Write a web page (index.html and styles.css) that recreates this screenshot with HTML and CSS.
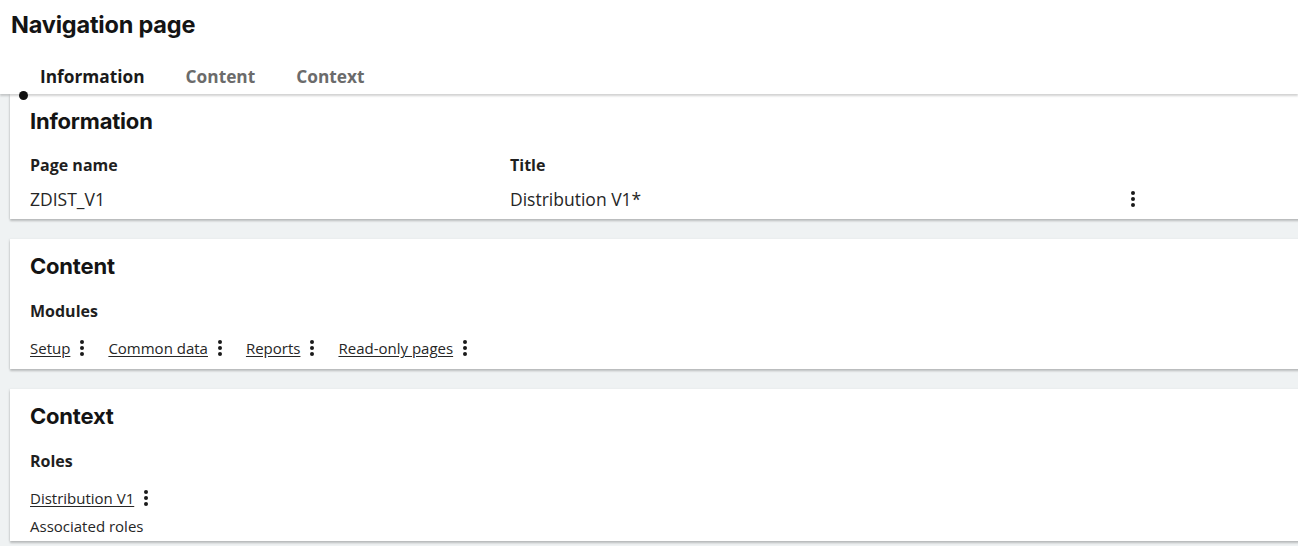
FILE: index.html
```html
<!DOCTYPE html>
<html>
<head>
<meta charset="utf-8">
<link rel="stylesheet" href="styles.css">
</head>
<body>
<header class="top">
  <h1 class="page-title">Navigation page</h1>
  <nav class="tabs">
    <span class="tab active">Information</span>
    <span class="tab">Content</span>
    <span class="tab">Context</span>
    <span class="tab-dot"></span>
  </nav>
</header>
<main class="main">
  <section class="card">
    <h2 class="card-title">Information</h2>
    <div class="info-grid">
      <div class="field">
        <div class="label">Page name</div>
        <div class="value">ZDIST_V1</div>
      </div>
      <div class="field">
        <div class="label">Title</div>
        <div class="value">Distribution V1*</div>
      </div>
      <div class="field">
        <div class="label">&nbsp;</div>
        <div class="value value-action">
          <svg class="kebab" width="4" height="16" viewBox="0 0 4 16"><circle cx="2" cy="2" r="2"/><circle cx="2" cy="8" r="2"/><circle cx="2" cy="14" r="2"/></svg>
        </div>
      </div>
    </div>
  </section>
  <section class="card card-links">
    <h2 class="card-title">Content</h2>
    <div class="label">Modules</div>
    <div class="links">
      <span class="link-item"><a class="link">Setup</a><svg class="kebab" width="4" height="16" viewBox="0 0 4 16"><circle cx="2" cy="2" r="2"/><circle cx="2" cy="8" r="2"/><circle cx="2" cy="14" r="2"/></svg></span>
      <span class="link-item"><a class="link">Common data</a><svg class="kebab" width="4" height="16" viewBox="0 0 4 16"><circle cx="2" cy="2" r="2"/><circle cx="2" cy="8" r="2"/><circle cx="2" cy="14" r="2"/></svg></span>
      <span class="link-item"><a class="link">Reports</a><svg class="kebab" width="4" height="16" viewBox="0 0 4 16"><circle cx="2" cy="2" r="2"/><circle cx="2" cy="8" r="2"/><circle cx="2" cy="14" r="2"/></svg></span>
      <span class="link-item"><a class="link">Read-only pages</a><svg class="kebab" width="4" height="16" viewBox="0 0 4 16"><circle cx="2" cy="2" r="2"/><circle cx="2" cy="8" r="2"/><circle cx="2" cy="14" r="2"/></svg></span>
    </div>
  </section>
  <section class="card card-last">
    <h2 class="card-title">Context</h2>
    <div class="label">Roles</div>
    <div class="links">
      <span class="link-item"><a class="link">Distribution V1</a><svg class="kebab" width="4" height="16" viewBox="0 0 4 16"><circle cx="2" cy="2" r="2"/><circle cx="2" cy="8" r="2"/><circle cx="2" cy="14" r="2"/></svg></span>
    </div>
    <div class="caption">Associated roles</div>
  </section>
</main>
</body>
</html>
```
FILE: styles.css
```css
html, body {
  margin: 0;
  padding: 0;
}
body {
  background: #eff2f3;
  font-family: "Open Sans", "Liberation Sans", sans-serif;
  color: #1f1f1f;
  overflow: hidden;
  width: 1298px;
  height: 546px;
}
.top {
  background: #fff;
  height: 94px;
  position: relative;
  box-shadow: 0 2px 2px rgba(0,0,0,0.18);
  z-index: 2;
}
.page-title {
  margin: 0;
  padding: 11px 0 0 11px;
  font-family: "Inter", "Liberation Sans", sans-serif;
  font-weight: 700;
  font-size: 23.5px;
  line-height: 28px;
  color: #141414;
  letter-spacing: -0.2px;
}
.tabs {
  display: flex;
  gap: 41px;
  padding: 27px 0 0 40px;
}
.tab {
  font-weight: 700;
  font-size: 17.3px;
  line-height: 22px;
  color: #6b6b6b;
}
.tab.active {
  color: #1a1a1a;
}
.tab-dot {
  position: absolute;
  left: 19px;
  top: 91px;
  width: 9px;
  height: 9px;
  border-radius: 50%;
  background: #111;
}
.main {
  display: flex;
  flex-direction: column;
  gap: 20px;
  padding: 0 0 0 10px;
}
.card {
  background: #fff;
  margin-right: -10px;
  padding: 12px 20px 8px 20px;
  box-shadow: 0 2px 2px rgba(0,0,0,0.22), -1px 0 2px rgba(0,0,0,0.06);
}
.card-title {
  margin: 0;
  font-family: "Inter", "Liberation Sans", sans-serif;
  font-weight: 700;
  font-size: 22px;
  line-height: 30px;
  color: #141414;
  letter-spacing: -0.2px;
}
.info-grid {
  display: grid;
  grid-template-columns: 480px 621px 40px;
  margin-top: 19px;
}
.label {
  font-weight: 700;
  font-size: 16px;
  line-height: 20px;
  color: #1f1f1f;
}
.card > .label {
  margin-top: 20px;
}
.value {
  font-size: 17.5px;
  line-height: 24px;
  margin-top: 12px;
  color: #262626;
}
.value-action {
  display: flex;
  align-items: center;
  height: 24px;
}
.kebab {
  fill: #1a1a1a;
  display: block;
}
.links {
  display: flex;
  gap: 24px;
  margin-top: 16px;
  line-height: 22px;
}
.link-item {
  display: flex;
  align-items: center;
  gap: 10px;
}
.link {
  font-size: 15px;
  color: #262626;
  text-decoration: underline;
  text-underline-offset: 2px;
}
.caption {
  font-size: 15px;
  line-height: 20px;
  color: #262626;
  margin-top: 7px;
}
.card-links {
  padding-bottom: 10px;
}
.card-last {
  padding-bottom: 5px;
}
```
